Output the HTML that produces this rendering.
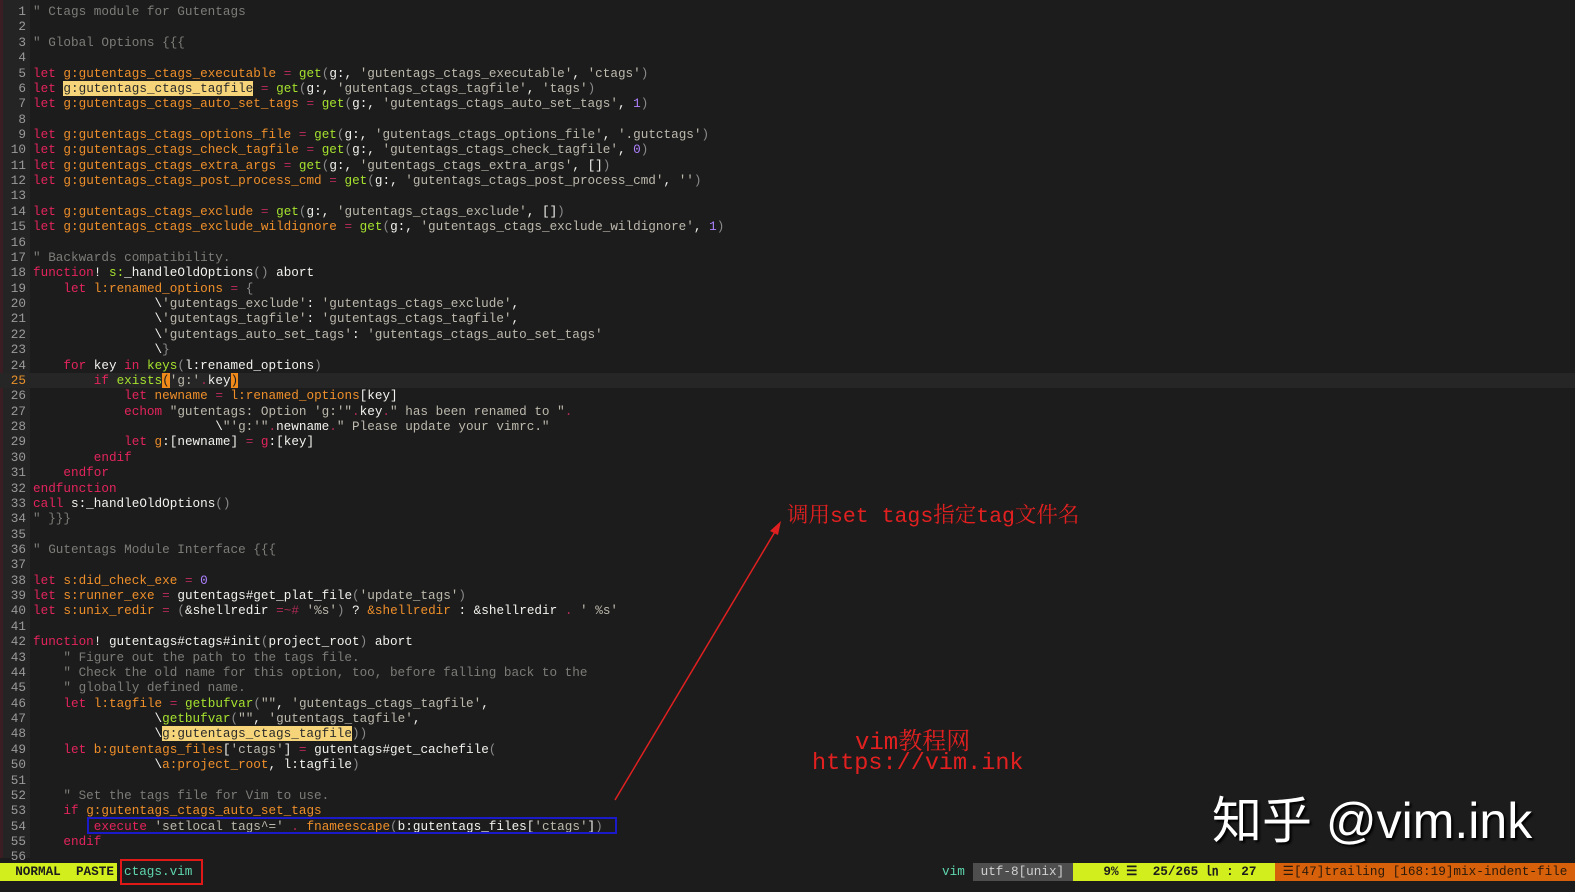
<!DOCTYPE html>
<html><head><meta charset="utf-8">
<style>
html,body{margin:0;padding:0;background:#1c1c1c;width:1575px;height:892px;overflow:hidden;position:relative}
.gut{position:absolute;left:0;top:0;width:30px;height:858px;background:#242424;border-left:3px solid #3a1e24;box-sizing:border-box}
.ln{position:absolute;left:0;width:1575px;height:15px;font:12.67px/15px "Liberation Mono",monospace;white-space:pre;color:#f2f2ee}
.ln .no{position:absolute;left:0;width:26px;text-align:right;color:#9a9a9a}
.ln .t{position:absolute;left:33px}
.cur{background:#262626}
.cur .no{color:#e8912a}
.k{color:#e3245c}.v{color:#ef8f2a}.f{color:#a6e22e}.s{color:#bdb9ad}.c{color:#7c7c78}.n{color:#ae81ff}.o{color:#b02a55}.p{color:#8a8a8a}
.hl{background:#f6d57a;color:#2a2a2a}
.br{background:#f08a1a;color:#1c1c1c}
.status{position:absolute;left:0;top:863px;height:18px;width:1575px;font:bold 12.67px/18px "Liberation Mono",monospace;white-space:pre}
.status span{position:absolute;top:0;height:18px}
.ann{position:absolute;color:#e32020;font-family:"Liberation Mono","Noto Serif CJK SC",serif;white-space:nowrap}
</style></head><body>
<div class="gut"></div>
<div class="ln" style="top:4px"><span class="no">1</span><span class="t c">" Ctags module for Gutentags</span></div>
<div class="ln" style="top:19.4px"><span class="no">2</span></div>
<div class="ln" style="top:34.7px"><span class="no">3</span><span class="t c">" Global Options {{{</span></div>
<div class="ln" style="top:50.1px"><span class="no">4</span></div>
<div class="ln" style="top:65.5px"><span class="no">5</span><span class="t"><span class="k">let</span> <span class="v">g:gutentags_ctags_executable</span> <span class="o">=</span> <span class="f">get</span><span class="p">(</span>g:, <span class="s">'gutentags_ctags_executable'</span>, <span class="s">'ctags'</span><span class="p">)</span></span></div>
<div class="ln" style="top:80.9px"><span class="no">6</span><span class="t"><span class="k">let</span> <span class="hl">g:gutentags_ctags_tagfile</span> <span class="o">=</span> <span class="f">get</span><span class="p">(</span>g:, <span class="s">'gutentags_ctags_tagfile'</span>, <span class="s">'tags'</span><span class="p">)</span></span></div>
<div class="ln" style="top:96.2px"><span class="no">7</span><span class="t"><span class="k">let</span> <span class="v">g:gutentags_ctags_auto_set_tags</span> <span class="o">=</span> <span class="f">get</span><span class="p">(</span>g:, <span class="s">'gutentags_ctags_auto_set_tags'</span>, <span class="n">1</span><span class="p">)</span></span></div>
<div class="ln" style="top:111.6px"><span class="no">8</span></div>
<div class="ln" style="top:127px"><span class="no">9</span><span class="t"><span class="k">let</span> <span class="v">g:gutentags_ctags_options_file</span> <span class="o">=</span> <span class="f">get</span><span class="p">(</span>g:, <span class="s">'gutentags_ctags_options_file'</span>, <span class="s">'.gutctags'</span><span class="p">)</span></span></div>
<div class="ln" style="top:142.3px"><span class="no">10</span><span class="t"><span class="k">let</span> <span class="v">g:gutentags_ctags_check_tagfile</span> <span class="o">=</span> <span class="f">get</span><span class="p">(</span>g:, <span class="s">'gutentags_ctags_check_tagfile'</span>, <span class="n">0</span><span class="p">)</span></span></div>
<div class="ln" style="top:157.7px"><span class="no">11</span><span class="t"><span class="k">let</span> <span class="v">g:gutentags_ctags_extra_args</span> <span class="o">=</span> <span class="f">get</span><span class="p">(</span>g:, <span class="s">'gutentags_ctags_extra_args'</span>, []<span class="p">)</span></span></div>
<div class="ln" style="top:173.1px"><span class="no">12</span><span class="t"><span class="k">let</span> <span class="v">g:gutentags_ctags_post_process_cmd</span> <span class="o">=</span> <span class="f">get</span><span class="p">(</span>g:, <span class="s">'gutentags_ctags_post_process_cmd'</span>, <span class="s">''</span><span class="p">)</span></span></div>
<div class="ln" style="top:188.4px"><span class="no">13</span></div>
<div class="ln" style="top:203.8px"><span class="no">14</span><span class="t"><span class="k">let</span> <span class="v">g:gutentags_ctags_exclude</span> <span class="o">=</span> <span class="f">get</span><span class="p">(</span>g:, <span class="s">'gutentags_ctags_exclude'</span>, []<span class="p">)</span></span></div>
<div class="ln" style="top:219.2px"><span class="no">15</span><span class="t"><span class="k">let</span> <span class="v">g:gutentags_ctags_exclude_wildignore</span> <span class="o">=</span> <span class="f">get</span><span class="p">(</span>g:, <span class="s">'gutentags_ctags_exclude_wildignore'</span>, <span class="n">1</span><span class="p">)</span></span></div>
<div class="ln" style="top:234.6px"><span class="no">16</span></div>
<div class="ln" style="top:249.9px"><span class="no">17</span><span class="t c">" Backwards compatibility.</span></div>
<div class="ln" style="top:265.3px"><span class="no">18</span><span class="t"><span class="k">function</span>! <span class="f">s:</span>_handleOldOptions<span class="p">()</span> abort</span></div>
<div class="ln" style="top:280.7px"><span class="no">19</span><span class="t">    <span class="k">let</span> <span class="v">l:renamed_options</span> <span class="o">=</span> <span class="p">{</span></span></div>
<div class="ln" style="top:296px"><span class="no">20</span><span class="t">                \<span class="s">'gutentags_exclude'</span>: <span class="s">'gutentags_ctags_exclude'</span>,</span></div>
<div class="ln" style="top:311.4px"><span class="no">21</span><span class="t">                \<span class="s">'gutentags_tagfile'</span>: <span class="s">'gutentags_ctags_tagfile'</span>,</span></div>
<div class="ln" style="top:326.8px"><span class="no">22</span><span class="t">                \<span class="s">'gutentags_auto_set_tags'</span>: <span class="s">'gutentags_ctags_auto_set_tags'</span></span></div>
<div class="ln" style="top:342.1px"><span class="no">23</span><span class="t">                \<span class="p">}</span></span></div>
<div class="ln" style="top:357.5px"><span class="no">24</span><span class="t">    <span class="k">for</span> key <span class="k">in</span> <span class="f">keys</span><span class="p">(</span>l:renamed_options<span class="p">)</span></span></div>
<div class="ln cur" style="top:372.9px"><span class="no">25</span><span class="t">        <span class="k">if</span> <span class="f">exists</span><span class="br">(</span><span class="s">'g:'</span><span class="o">.</span>key<span class="br">)</span></span></div>
<div class="ln" style="top:388.3px"><span class="no">26</span><span class="t">            <span class="k">let</span> <span class="v">newname</span> <span class="o">=</span> <span class="v">l:renamed_options</span>[key]</span></div>
<div class="ln" style="top:403.6px"><span class="no">27</span><span class="t">            <span class="k">echom</span> <span class="s">"gutentags: Option 'g:'"</span><span class="o">.</span>key<span class="o">.</span><span class="s">" has been renamed to "</span><span class="o">.</span></span></div>
<div class="ln" style="top:419px"><span class="no">28</span><span class="t">                        \<span class="s">"'g:'"</span><span class="o">.</span>newname<span class="o">.</span><span class="s">" Please update your vimrc."</span></span></div>
<div class="ln" style="top:434.4px"><span class="no">29</span><span class="t">            <span class="k">let</span> <span class="v">g</span>:[newname] <span class="o">=</span> <span class="k">g</span>:[key]</span></div>
<div class="ln" style="top:449.7px"><span class="no">30</span><span class="t">        <span class="k">endif</span></span></div>
<div class="ln" style="top:465.1px"><span class="no">31</span><span class="t">    <span class="k">endfor</span></span></div>
<div class="ln" style="top:480.5px"><span class="no">32</span><span class="t"><span class="k">endfunction</span></span></div>
<div class="ln" style="top:495.8px"><span class="no">33</span><span class="t"><span class="k">call</span> s:_handleOldOptions<span class="p">()</span></span></div>
<div class="ln" style="top:511.2px"><span class="no">34</span><span class="t c">" }}}</span></div>
<div class="ln" style="top:526.6px"><span class="no">35</span></div>
<div class="ln" style="top:542px"><span class="no">36</span><span class="t c">" Gutentags Module Interface {{{</span></div>
<div class="ln" style="top:557.3px"><span class="no">37</span></div>
<div class="ln" style="top:572.7px"><span class="no">38</span><span class="t"><span class="k">let</span> <span class="v">s:did_check_exe</span> <span class="o">=</span> <span class="n">0</span></span></div>
<div class="ln" style="top:588.1px"><span class="no">39</span><span class="t"><span class="k">let</span> <span class="v">s:runner_exe</span> <span class="o">=</span> gutentags#get_plat_file<span class="p">(</span><span class="s">'update_tags'</span><span class="p">)</span></span></div>
<div class="ln" style="top:603.4px"><span class="no">40</span><span class="t"><span class="k">let</span> <span class="v">s:unix_redir</span> <span class="o">=</span> <span class="p">(</span>&amp;shellredir <span class="o">=~#</span> <span class="s">'%s'</span><span class="p">)</span> ? <span class="v">&amp;shellredir</span> : &amp;shellredir <span class="o">.</span> <span class="s">' %s'</span></span></div>
<div class="ln" style="top:618.8px"><span class="no">41</span></div>
<div class="ln" style="top:634.2px"><span class="no">42</span><span class="t"><span class="k">function</span>! gutentags#ctags#init<span class="p">(</span>project_root<span class="p">)</span> abort</span></div>
<div class="ln" style="top:649.5px"><span class="no">43</span><span class="t c">    " Figure out the path to the tags file.</span></div>
<div class="ln" style="top:664.9px"><span class="no">44</span><span class="t c">    " Check the old name for this option, too, before falling back to the</span></div>
<div class="ln" style="top:680.3px"><span class="no">45</span><span class="t c">    " globally defined name.</span></div>
<div class="ln" style="top:695.6px"><span class="no">46</span><span class="t">    <span class="k">let</span> <span class="v">l:tagfile</span> <span class="o">=</span> <span class="f">getbufvar</span><span class="p">(</span><span class="s">""</span>, <span class="s">'gutentags_ctags_tagfile'</span>,</span></div>
<div class="ln" style="top:711px"><span class="no">47</span><span class="t">                \<span class="f">getbufvar</span><span class="p">(</span><span class="s">""</span>, <span class="s">'gutentags_tagfile'</span>,</span></div>
<div class="ln" style="top:726.4px"><span class="no">48</span><span class="t">                \<span class="hl">g:gutentags_ctags_tagfile</span><span class="p">))</span></span></div>
<div class="ln" style="top:741.8px"><span class="no">49</span><span class="t">    <span class="k">let</span> <span class="v">b:gutentags_files</span>[<span class="s">'ctags'</span>] <span class="o">=</span> gutentags#get_cachefile<span class="p">(</span></span></div>
<div class="ln" style="top:757.1px"><span class="no">50</span><span class="t">                \<span class="v">a:project_root</span>, l:tagfile<span class="p">)</span></span></div>
<div class="ln" style="top:772.5px"><span class="no">51</span></div>
<div class="ln" style="top:787.9px"><span class="no">52</span><span class="t c">    " Set the tags file for Vim to use.</span></div>
<div class="ln" style="top:803.2px"><span class="no">53</span><span class="t">    <span class="k">if</span> <span class="v">g:gutentags_ctags_auto_set_tags</span></span></div>
<div class="ln" style="top:818.6px"><span class="no">54</span><span class="t">        <span class="k">execute</span> <span class="s">'setlocal tags^='</span> <span class="o">.</span> <span class="v">fnameescape</span><span class="p">(</span>b:gutentags_files[<span class="s">'ctags'</span>]<span class="p">)</span></span></div>
<div class="ln" style="top:834px"><span class="no">55</span><span class="t">    <span class="k">endif</span></span></div>
<div class="ln" style="top:849.3px"><span class="no">56</span></div>

<div style="position:absolute;left:87px;top:817px;width:530px;height:17px;border:2px solid #1a1ac8;box-sizing:border-box"></div>

<div class="status">
<span style="left:0;width:117px;background:#d2ee1c;color:#1c1c1c">  NORMAL  PASTE </span>
<span style="left:124px;color:#5fd7af;font-weight:normal">ctags.vim</span>
<span style="left:942px;color:#5fd7af;font-weight:normal">vim</span>
<span style="left:973px;width:100px;background:#4e4e4e;color:#d0d0d0;font-weight:normal"> utf-8[unix] </span>
<span style="left:1073px;width:202px;background:#d2ee1c;color:#1c1c1c">    9% ☰  25/265 ㏑ : 27 </span>
<span style="left:1275px;width:300px;background:#d7600a;color:#2a1a0a;font-weight:normal"> ☰[47]trailing [168:19]mix-indent-file</span>
</div>
<div style="position:absolute;left:120px;top:859px;width:83px;height:26px;border:2px solid #e01818;box-sizing:border-box"></div>

<svg style="position:absolute;left:0;top:0" width="1575" height="892">
<line x1="615" y1="800" x2="776" y2="530" stroke="#e02020" stroke-width="1.5"/>
<polygon points="781,521 770,531 778,535" fill="#e02020"/>
</svg>
<div class="ann" style="left:787px;top:498px;font-size:21.5px">调用set tags指定tag文件名</div>
<div class="ann" style="left:855px;top:721px;font-size:24px">vim教程网</div>
<div class="ann" style="left:812px;top:750px;font-size:23.5px">https://vim.ink</div>
<div style="position:absolute;left:1212px;top:790px;font:50px/62px 'Liberation Sans','Noto Sans CJK SC',sans-serif;color:#fff;white-space:nowrap;text-shadow:2px 2px 2px #000">知乎 @vim.ink</div>
</body></html>
